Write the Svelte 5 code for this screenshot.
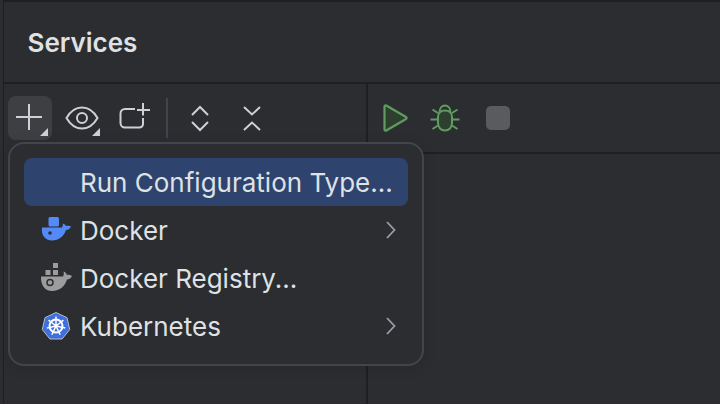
<script>
  const items = [
    { label: 'Run Configuration Type...', icon: '', selected: true },
    { label: 'Docker', icon: 'docker', arrow: true },
    { label: 'Docker Registry...', icon: 'registry' },
    { label: 'Kubernetes', icon: 'k8s', arrow: true }
  ];
  const spokes = [0, 51.4, 102.8, 154.3, 205.7, 257.1, 308.6];
</script>

<div class="root">
  <div class="frame">
    <header class="title">Services</header>
    <div class="panes">
      <section class="left">
        <div class="tools">
          <button class="tool active" aria-label="Add">
            <svg width="44" height="44" viewBox="0 0 44 44"><path d="M21 8V34M8 21H34" class="s"/><path d="M40 32V40H32Z" class="f"/></svg>
          </button>
          <button class="tool" aria-label="View">
            <svg width="44" height="44" viewBox="0 0 44 44"><path d="M6.500 22C10.500 15 15.500 11.500 22 11.500S33.500 15 37.500 22C33.500 29 28.500 32.500 22 32.500S10.500 29 6.500 22Z" class="s"/><circle cx="22" cy="22" r="5" class="s"/><path d="M40 32V40H32Z" class="f"/></svg>
          </button>
          <button class="tool" aria-label="New group">
            <svg width="44" height="44" viewBox="0 0 44 44"><path d="M23 13H13A4.500 4.500 0 0 0 8.500 17.500V27A4.500 4.500 0 0 0 13 31.500H27.500A3.500 3.500 0 0 0 31 28V22" class="s"/><path d="M31 7V19.500M25 14H38" class="s"/></svg>
          </button>
          <span class="sep"></span>
          <button class="tool narrow" aria-label="Expand all">
            <svg width="30" height="44" viewBox="0 0 30 44"><path d="M7 19L15 11L23 19M7 26L15 34L23 26" class="s"/></svg>
          </button>
          <button class="tool narrow" aria-label="Collapse all">
            <svg width="30" height="44" viewBox="0 0 30 44"><path d="M7 11L15 18.500L23 11M7 34L15 26.500L23 34" class="s"/></svg>
          </button>
        </div>
      </section>
      <section class="right">
        <div class="runbar">
          <svg width="28" height="30" viewBox="0 0 28 30" aria-label="Run"><path d="M3.500 3.500C3.500 2.500 4.500 2 5.300 2.500L25 14C25.800 14.500 25.800 15.500 25 16L5.300 27.500C4.500 28 3.500 27.500 3.500 26.500Z" fill="#2f3f2f" stroke="#5f9d5f" stroke-width="2.200" stroke-linejoin="round"/></svg>
          <svg width="30" height="30" viewBox="0 0 30 30" aria-label="Debug"><path d="M15 7.500C20 7.500 22 11 22 14V20C22 24.500 19 27.500 15 27.500S8 24.500 8 20V14C8 11 10 7.500 15 7.500Z" fill="#2f3f2f" stroke="#5f9d5f" stroke-width="2"/><path d="M9.500 9.500C9.500 5 12 2.500 15 2.500S20.500 5 20.500 9.500M8 10L2.500 6.500M22 10L27.500 6.500M8 16.500H.5M22 16.500H29.500M8 22.500L2.500 26M22 22.500L27.500 26" fill="none" stroke="#5f9d5f" stroke-width="2"/></svg>
          <span class="stop"></span>
        </div>
      </section>
    </div>
  </div>

  <div class="popup">
    {#each items as item}
      <div class="row" class:selected={item.selected}>
        <span class="ico">
          {#if item.icon === 'docker'}
            <svg width="30" height="26" viewBox="0 0 30 26"><rect x="7.500" y="0" width="10.500" height="9.500" rx="1.500" fill="#548af7"/><path d="M1 10.500H21C22 9 22 7 21.500 6.500C23.500 7 24.500 8 25 9C26.500 8.500 28.500 8.500 30 9.500C29 12 27 13 25 13C23 19 18 23.500 11 23.500C4 23.500 0 18 1 10.500Z" fill="#548af7"/><circle cx="9" cy="16" r="1.800" fill="#2b2d30"/></svg>
          {:else if item.icon === 'registry'}
            <svg width="32" height="30" viewBox="0 0 32 30"><g fill="#9c9c9c"><rect x="13" y="0" width="5" height="5"/><rect x="5.500" y="7" width="5" height="5"/><rect x="13" y="7" width="5" height="5"/><path d="M1 13.500H23C24 12 24 10 23.500 8.500C25.500 9 26.500 10.500 27 12C28.500 11.500 30 12 32 13C31 15.500 29 16.500 27 16.500C25 23 20 28 12 28C5 28 0.500 22 1 13.500Z"/></g><circle cx="10" cy="19.500" r="3" fill="none" stroke="#2b2d30" stroke-width="1.500"/></svg>
          {:else if item.icon === 'k8s'}
            <svg width="30" height="30" viewBox="0 0 30 30">
              <path d="M15 1.500L26 6.700L28.700 18.500L21.100 28H8.900L1.300 18.500L4 6.700Z" fill="#3d6fe0" stroke="#b9bcc4" stroke-width="1" stroke-linejoin="round"/>
              <circle cx="15" cy="15" r="6.500" fill="none" stroke="#fff" stroke-width="2"/>
              {#each spokes as a}
                <path d="M15 15V5.500" stroke="#fff" stroke-width="1.500" transform="rotate({a} 15 15)"/>
              {/each}
              <circle cx="15" cy="15" r="1.800" fill="#fff"/>
            </svg>
          {/if}
        </span>
        <span class="label">{item.label}</span>
        {#if item.arrow}
          <svg class="arrow" width="12" height="20" viewBox="0 0 12 20"><path d="M2 2L9.500 10L2 18" fill="none" stroke="#9a9da3" stroke-width="1.800"/></svg>
        {/if}
      </div>
    {/each}
  </div>
</div>

<style>
  :global(body) { margin: 0; background: #2b2d30; }
  .root {
    position: relative;
    width: 720px;
    height: 404px;
    overflow: hidden;
    padding-left: 3px;
    box-sizing: border-box;
    background: #2b2d30;
    font-family: Inter, "Liberation Sans", sans-serif;
  }
  .frame {
    height: 100%;
    display: flex;
    flex-direction: column;
    border-left: 1.500px solid #1e1f22;
    border-top: 2px solid #1e1f22;
    box-sizing: border-box;
  }
  .title {
    height: 82px;
    flex: none;
    display: flex;
    align-items: center;
    padding-left: 23.500px;
    box-sizing: border-box;
    border-bottom: 2px solid #1e1f22;
    color: #dfe1e5;
    font-size: 26px;
    font-weight: 600;
  }
  .panes { flex: 1; display: flex; min-height: 0; }
  .left {
    width: 363.500px;
    flex: none;
    border-right: 2px solid #1e1f22;
    box-sizing: border-box;
  }
  .tools {
    display: flex;
    align-items: center;
    height: 44px;
    padding: 12px 0 0 3.500px;
    gap: 0;
  }
  .tool {
    width: 44px;
    height: 44px;
    margin-right: 8px;
    padding: 0;
    border: 0;
    background: none;
    border-radius: 8px;
    display: flex;
    align-items: center;
    justify-content: center;
  }
  .tool.active { background: #3d3f43; }
  .tool.narrow { width: 30px; margin-right: 22px; }
  .sep { width: 2px; height: 40px; background: #43454a; margin: 0 17px 0 2px; }
  .s { fill: none; stroke: #ced0d6; stroke-width: 2; }
  .f { fill: #ced0d6; }
  .right { flex: 1; }
  .runbar {
    height: 70px;
    box-sizing: border-box;
    border-bottom: 2px solid #1e1f22;
    display: flex;
    align-items: center;
    padding-left: 13px;
    gap: 21px;
  }
  .stop {
    width: 24px;
    height: 24px;
    margin-left: 5px;
    border-radius: 5px;
    background: #5a5b5e;
  }
  .popup {
    position: absolute;
    left: 8px;
    top: 142px;
    width: 416px;
    height: 224px;
    box-sizing: border-box;
    padding: 14px;
    background: #2b2d30;
    border: 2px solid #43454a;
    border-radius: 16px;
    box-shadow: 0 2px 14px rgba(0, 0, 0, 0.12);
  }
  .row {
    height: 48px;
    display: flex;
    align-items: center;
    border-radius: 8px;
    color: #dfe1e5;
    font-size: 26px;
    padding: 0 11px 0 16px;
  }
  .row.selected { background: #2e436e; }
  .ico {
    width: 32px;
    flex: none;
    display: flex;
    align-items: center;
    justify-content: center;
    margin-right: 8px;
  }
  .label { flex: 1; white-space: nowrap; }
  .arrow { flex: none; }
</style>
